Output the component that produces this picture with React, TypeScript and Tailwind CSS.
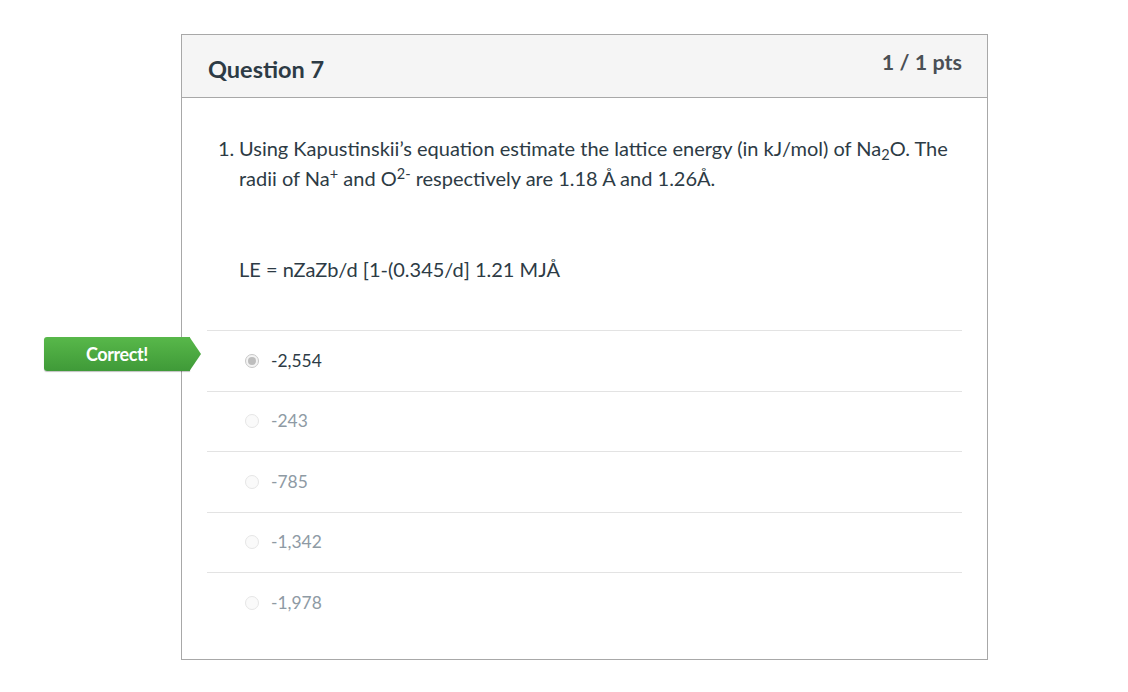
const answers = [
  { id: 'a1', label: '-2,554', selected: true },
  { id: 'a2', label: '-243', selected: false },
  { id: 'a3', label: '-785', selected: false },
  { id: 'a4', label: '-1,342', selected: false },
  { id: 'a5', label: '-1,978', selected: false },
];

function Radio({ checked }: { checked: boolean }) {
  if (checked) {
    return (
      <span className="flex h-[14px] w-[14px] items-center justify-center rounded-full border border-[#c8c8c8] bg-[#f4f4f4]">
        <span className="h-[8px] w-[8px] rounded-full bg-[#bdbdbd]" />
      </span>
    );
  }
  return <span className="h-[14px] w-[14px] rounded-full border border-[#e6e6e6] bg-[#fafafa]" />;
}

function CorrectBadge() {
  return (
    <div className="absolute left-[-163px] top-[6px] flex h-[34px] items-center">
      <div className="flex h-[34px] w-[146px] items-center justify-center rounded-l-[3px] bg-gradient-to-b from-[#58b84a] to-[#3f9a38] text-[18px] font-bold tracking-[-0.4px] text-white shadow-[0_1px_1px_rgba(0,0,0,0.25)]">
        Correct!
      </div>
      <svg width="12" height="34" viewBox="0 0 12 34" className="-ml-px">
        <defs>
          <linearGradient id="g" x1="0" y1="0" x2="0" y2="1">
            <stop offset="0" stopColor="#58b84a" />
            <stop offset="1" stopColor="#3f9a38" />
          </linearGradient>
        </defs>
        <path d="M0 0 L0.5 0 L12 17 L0.5 34 L0 34 Z" fill="url(#g)" />
      </svg>
    </div>
  );
}

export default function App() {
  return (
    <div
      className="min-h-[692px] bg-white pt-[34px] pl-[181px]"
      style={{ fontFamily: 'Lato, "Open Sans", sans-serif' }}
    >
      <div className="w-[807px] border border-[#a8a8a8] bg-white">
        <div className="flex h-[63px] items-start justify-between border-b border-[#a8a8a8] bg-[#f5f5f5] pl-[26px] pr-[25px]">
          <h2 className="pt-[19px] text-[23.5px] font-bold leading-[30px] text-[#2d3b45]">Question 7</h2>
          <span className="pt-[12px] text-[21.5px] font-bold leading-[30px] text-[#4a4f54]">1 / 1 pts</span>
        </div>

        <div className="pt-[35px] pl-[36px] pr-[25px] text-[20px] leading-[30px] text-[#2d3b45]">
          <div className="flex">
            <span className="w-[21px] shrink-0">1.</span>
            <p>
              Using Kapustinskii’s equation estimate the lattice energy (in kJ/mol) of Na
              <sub className="text-[14.5px] leading-none">2</sub>O. The radii of Na
              <sup className="text-[14.5px] leading-none">+</sup> and O
              <sup className="text-[14.5px] leading-none">2-</sup> respectively are 1.18 Å and 1.26Å.
            </p>
          </div>
          <p className="mt-[61px] pl-[21px]">LE = nZaZb/d [1-(0.345/d] 1.21 MJÅ</p>
        </div>

        <div className="relative mx-[25px] mt-[46px] mb-[26px]">
          <ul>
            {answers.map((a, i) => (
              <li
                key={a.id}
                className="relative flex h-[60.5px] items-center gap-[12px] border-t border-[#e3e3e3] pl-[38px]"
              >
                {i === 0 ? <CorrectBadge /> : null}
                <Radio checked={a.selected} />
                <span
                  className={`text-[17.4px] ${a.selected ? 'text-[#2d3b45]' : 'text-[#8e9aa4]'}`}
                >
                  {a.label}
                </span>
              </li>
            ))}
          </ul>
        </div>
      </div>
    </div>
  );
}
